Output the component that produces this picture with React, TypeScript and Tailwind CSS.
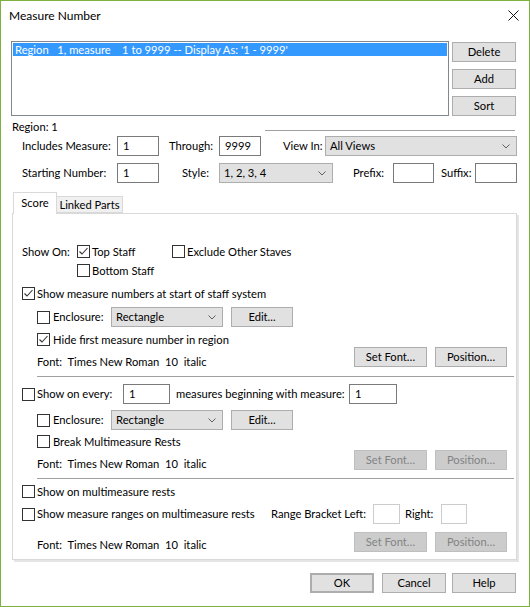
import type { ReactNode } from "react";

const Check = ({ checked = false }: { checked?: boolean }) => (
  <span className="flex h-[13px] w-[13px] shrink-0 items-center justify-center border border-[#333333] bg-white">
    {checked && (
      <svg width="11" height="11" viewBox="0 0 11 11" fill="none">
        <path d="M1.5 5.5 L4 8 L9.5 2" stroke="#333333" strokeWidth="1.1" />
      </svg>
    )}
  </span>
);

const Chevron = () => (
  <svg width="8" height="5" viewBox="0 0 8 5" fill="none" className="shrink-0">
    <path d="M0.5 0.5 L4 4 L7.5 0.5" stroke="#606060" strokeWidth="1" />
  </svg>
);

const Btn = ({
  children,
  className = "",
  disabled = false,
}: {
  children: ReactNode;
  className?: string;
  disabled?: boolean;
}) => (
  <div
    className={`flex h-[20px] shrink-0 items-center justify-center border ${
      disabled
        ? "border-[#bfbfbf] bg-[#cccccc] text-[#838383]"
        : "border-[#adadad] bg-[#e1e1e1] text-black"
    } ${className}`}
  >
    {children}
  </div>
);

const Field = ({ value = "", className = "" }: { value?: string; className?: string }) => (
  <div className={`flex h-[20px] shrink-0 items-center border border-[#7a7a7a] bg-white pl-[5px] ${className}`}>
    {value}
  </div>
);

const Select = ({ value, className = "" }: { value: string; className?: string }) => (
  <div
    className={`flex h-[20px] shrink-0 items-center justify-between border border-[#adadad] bg-[#e1e1e1] pl-[4px] pr-[6px] ${className}`}
  >
    <span>{value}</span>
    <Chevron />
  </div>
);

const FontRow = ({ disabled, textTop }: { disabled?: boolean; textTop: string }) => (
  <div className="flex h-[20px] items-start">
    <span className={`ml-[15px] leading-[14px] ${textTop}`}>
      Font:&nbsp; Times New Roman&nbsp; 10&nbsp; italic
    </span>
    <div className="ml-auto flex gap-[8px]">
      <Btn className="w-[73px]" disabled={disabled}>
        Set Font…
      </Btn>
      <Btn className="w-[72px]" disabled={disabled}>
        Position…
      </Btn>
    </div>
  </div>
);

const EnclosureRow = ({ top }: { top: string }) => (
  <div className={`flex h-[20px] items-center pl-[15px] ${top}`}>
    <Check />
    <span className="ml-[3px] w-[58px]">Enclosure:</span>
    <Select value="Rectangle" className="w-[112px]" />
    <Btn className="ml-[8px] w-[62px]">Edit...</Btn>
  </div>
);

export default function App() {
  return (
    <div className="flex h-[607px] w-[530px] flex-col whitespace-nowrap border border-[#7db13f] bg-white font-['Lato',sans-serif] text-[11.2px] leading-[14px] text-black">
      {/* title bar */}
      <div className="flex h-[29px] shrink-0 items-center justify-between pl-[8px] pr-[10px]">
        <span className="pt-[1px] text-[12px]">Measure Number</span>
        <svg width="11" height="11" viewBox="0 0 11 11" fill="none">
          <path d="M0.5 0.5 L10.5 10.5 M10.5 0.5 L0.5 10.5" stroke="#111111" strokeWidth="1" />
        </svg>
      </div>

      <div className="flex flex-col pl-[10px]">
        {/* region list */}
        <div className="mt-[11px] flex">
          <div className="h-[75px] w-[438px] border border-[#828790] bg-white p-px">
            <div className="h-[13px] whitespace-pre bg-[#3399ff] pl-[2px] leading-[13px] text-white">
              {"Region   1, measure    1 to 9999 -- Display As: '1 - 9999'"}
            </div>
          </div>
          <div className="ml-[3px] flex flex-col gap-[7px] pt-px">
            <Btn className="w-[64px]">Delete</Btn>
            <Btn className="w-[64px]">Add</Btn>
            <Btn className="w-[64px]">Sort</Btn>
          </div>
        </div>

        {/* region header */}
        <div className="mt-[4px] flex h-[14px] items-start">
          <span className="pl-px">Region: 1</span>
          <div className="ml-auto mr-[14px] mt-[10px] h-px w-[250px] bg-[#a0a0a0]" />
        </div>

        <div className="mt-[2px] flex h-[20px] items-center pl-[11px]">
          <span className="w-[95px]">Includes Measure:</span>
          <Field value="1" className="w-[42px]" />
          <span className="ml-[10px] w-[50px]">Through:</span>
          <Field value="9999" className="w-[42px]" />
          <span className="ml-[22px] w-[42px]">View In:</span>
          <Select value="All Views" className="w-[192px]" />
        </div>

        <div className="mt-[7px] flex h-[20px] items-center pl-[11px]">
          <span className="w-[95px]">Starting Number:</span>
          <Field value="1" className="w-[42px]" />
          <span className="ml-[23px] w-[37px]">Style:</span>
          <Select value="1, 2, 3, 4" className="w-[114px]" />
          <span className="ml-[20px] w-[40px]">Prefix:</span>
          <Field className="w-[41px]" />
          <span className="ml-[7px] w-[34px]">Suffix:</span>
          <Field className="w-[42px]" />
        </div>

        {/* tabs */}
        <div className="mt-[9px] flex h-[21px] items-end pl-[2px]">
          <div className="relative z-10 mb-[-1px] flex h-[22px] w-[44px] justify-center border border-b-0 border-[#d9d9d9] bg-white pt-[3px]">
            Score
          </div>
          <div className="flex h-[17px] w-[66px] items-center justify-center border border-l-0 border-[#d9d9d9] bg-[#f0f0f0]">
            Linked Parts
          </div>
        </div>

        <div className="ml-px flex h-[347px] w-[505px] flex-col border border-[#d9d9d9] bg-white pl-[9px] pr-[9px] shadow-[2px_2px_0_#e5e5e5]">
          {/* show on */}
          <div className="mt-[31px] flex h-[13px] items-center">
            <span className="w-[55px]">Show On:</span>
            <div className="flex w-[95px] items-center gap-[2px]">
              <Check checked />
              <span>Top Staff</span>
            </div>
            <Check />
            <span className="ml-[2px]">Exclude Other Staves</span>
          </div>
          <div className="mt-[6px] flex h-[13px] items-center gap-[2px] pl-[55px]">
            <Check />
            <span>Bottom Staff</span>
          </div>

          <div className="mt-[10px] flex h-[13px] items-center gap-[2px]">
            <Check checked />
            <span>Show measure numbers at start of staff system</span>
          </div>
          <EnclosureRow top="mt-[7px]" />
          <div className="mt-[6px] flex h-[13px] items-center gap-[3px] pl-[15px]">
            <Check checked />
            <span>Hide first measure number in region</span>
          </div>
          <div className="mt-px">
            <FontRow textTop="mt-[8px]" />
          </div>

          <div className="ml-[15px] mr-[-7px] mt-[9px] h-px bg-[#a0a0a0]" />

          {/* show on every */}
          <div className="mt-[7px] flex h-[20px] items-center">
            <Check />
            <span className="ml-[2px] w-[86px]">Show on every:</span>
            <Field value="1" className="w-[47px]" />
            <span className="ml-[6px] w-[173px]">measures beginning with measure:</span>
            <Field value="1" className="w-[48px]" />
          </div>
          <EnclosureRow top="mt-[6px]" />
          <div className="mt-[5px] flex h-[13px] items-center gap-[3px] pl-[15px]">
            <Check />
            <span>Break Multimeasure Rests</span>
          </div>
          <div className="mt-[2px]">
            <FontRow disabled textTop="mt-[7px]" />
          </div>

          <div className="ml-[15px] mr-[-7px] mt-[8px] h-px bg-[#a0a0a0]" />

          {/* multimeasure rests */}
          <div className="mt-[6px] flex h-[13px] items-center gap-[2px]">
            <Check />
            <span>Show on multimeasure rests</span>
          </div>
          <div className="mt-[6px] flex h-[20px] items-center">
            <Check />
            <span className="ml-[2px] w-[234px]">Show measure ranges on multimeasure rests</span>
            <span className="w-[102px]">Range Bracket Left:</span>
            <div className="h-[20px] w-[27px] border border-[#cccccc] bg-white" />
            <span className="ml-[5px] w-[36px]">Right:</span>
            <div className="h-[20px] w-[26px] border border-[#cccccc] bg-white" />
          </div>
          <div className="mt-[8px]">
            <FontRow disabled textTop="mt-[6px]" />
          </div>
        </div>

        {/* dialog buttons */}
        <div className="mt-[13px] flex justify-end pr-[13px]">
          <Btn className="w-[64px] border-2 border-[#0078d7]">OK</Btn>
          <Btn className="ml-[8px] w-[64px]">Cancel</Btn>
          <Btn className="ml-[6px] w-[64px]">Help</Btn>
        </div>
      </div>
    </div>
  );
}
